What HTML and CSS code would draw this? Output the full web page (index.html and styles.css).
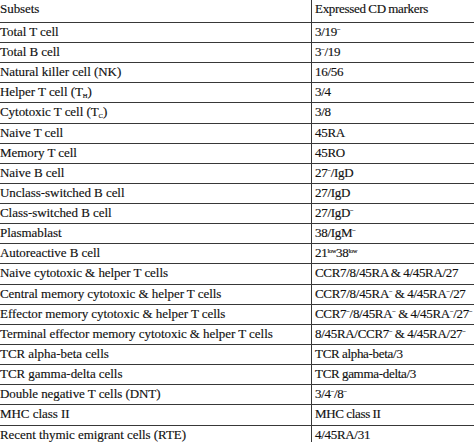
FILE: index.html
```html
<!DOCTYPE html>
<html>
<head>
<meta charset="utf-8">
<link rel="stylesheet" href="styles.css">
</head>
<body>
<div class="tbl">
  <div class="row head"><div class="c1">Subsets</div><div class="c2">Expressed CD markers</div></div>
  <div class="row"><div class="c1">Total T cell</div><div class="c2">3/19<sup>−</sup></div></div>
  <div class="row"><div class="c1">Total B cell</div><div class="c2">3<sup>−</sup>/19</div></div>
  <div class="row"><div class="c1">Natural killer cell (NK)</div><div class="c2">16/56</div></div>
  <div class="row"><div class="c1">Helper T cell (T<sub>H</sub>)</div><div class="c2">3/4</div></div>
  <div class="row"><div class="c1">Cytotoxic T cell (T<sub>C</sub>)</div><div class="c2">3/8</div></div>
  <div class="row"><div class="c1">Naive T cell</div><div class="c2">45RA</div></div>
  <div class="row"><div class="c1">Memory T cell</div><div class="c2">45RO</div></div>
  <div class="row"><div class="c1">Naive B cell</div><div class="c2">27<sup>−</sup>/IgD</div></div>
  <div class="row"><div class="c1">Unclass-switched B cell</div><div class="c2">27/IgD</div></div>
  <div class="row"><div class="c1">Class-switched B cell</div><div class="c2">27/IgD<sup>−</sup></div></div>
  <div class="row"><div class="c1">Plasmablast</div><div class="c2">38/IgM<sup>−</sup></div></div>
  <div class="row"><div class="c1">Autoreactive B cell</div><div class="c2">21<sup>low</sup>38<sup>low</sup></div></div>
  <div class="row"><div class="c1">Naive cytotoxic &amp; helper T cells</div><div class="c2">CCR7/8/45RA &amp; 4/45RA/27</div></div>
  <div class="row"><div class="c1">Central memory cytotoxic &amp; helper T cells</div><div class="c2">CCR7/8/45RA<sup>−</sup> &amp; 4/45RA<sup>−</sup>/27</div></div>
  <div class="row"><div class="c1">Effector memory cytotoxic &amp; helper T cells</div><div class="c2">CCR7<sup>−</sup>/8/45RA<sup>−</sup> &amp; 4/45RA<sup>−</sup>/27<sup>−</sup></div></div>
  <div class="row"><div class="c1">Terminal effector memory cytotoxic &amp; helper T cells</div><div class="c2">8/45RA/CCR7<sup>−</sup> &amp; 4/45RA/27<sup>−</sup></div></div>
  <div class="row"><div class="c1">TCR alpha-beta cells</div><div class="c2">TCR alpha-beta/3</div></div>
  <div class="row"><div class="c1">TCR gamma-delta cells</div><div class="c2">TCR gamma-delta/3</div></div>
  <div class="row"><div class="c1">Double negative T cells (DNT)</div><div class="c2">3/4<sup>−</sup>/8<sup>−</sup></div></div>
  <div class="row"><div class="c1">MHC class II</div><div class="c2">MHC class II</div></div>
  <div class="row last"><div class="c1">Recent thymic emigrant cells (RTE)</div><div class="c2">4/45RA/31</div></div>
</div>
</body>
</html>
```

FILE: styles.css
```css
html, body {
  margin: 0;
  padding: 0;
  background: #fff;
}
body {
  width: 474px;
  height: 442px;
  overflow: hidden;
  font-family: "Liberation Serif", "DejaVu Serif", serif;
  font-size: 13px;
  color: #111;
  -webkit-text-stroke: 0.15px #111;
}
.tbl {
  display: flex;
  flex-direction: column;
}
.row {
  display: grid;
  grid-template-columns: 312px 1fr;
  box-sizing: border-box;
  height: 20.15px;
  flex: none;
  border-bottom: 1px solid #383838;
  line-height: 18px;
  white-space: nowrap;
}
.row.head {
  height: 22.8px;
  line-height: 17px;
}
.row.last {
  border-bottom: none;
  height: 30px;
}
.c1 {
  border-right: 1px solid #383838;
  letter-spacing: -0.05px;
}
.c2 {
  padding-left: 3px;
  letter-spacing: -0.3px;
  word-spacing: -0.4px;
}
sup {
  font-size: 0.5em;
  vertical-align: 0.6em;
  line-height: 0;
  letter-spacing: -0.4px;
}
sub {
  font-size: 0.5em;
  vertical-align: -0.25em;
  line-height: 0;
}
```
